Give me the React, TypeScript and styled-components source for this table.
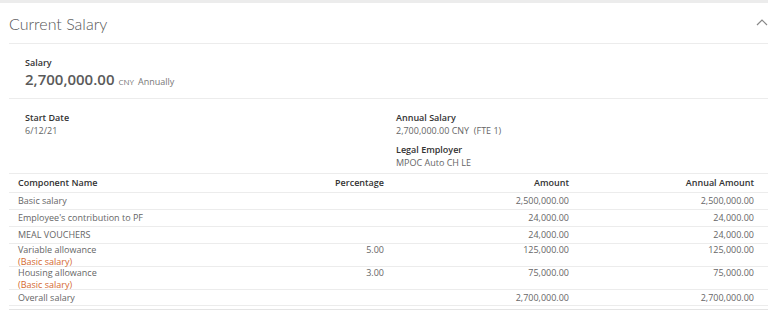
import React from "react";
import styled, { createGlobalStyle } from "styled-components";

const GlobalStyle = createGlobalStyle`
  body {
    margin: 0;
    background: #fff;
    font-family: "Open Sans", "Noto Sans", sans-serif;
    color: #555;
  }
`;

const Page = styled.div`
  width: 768px;
  height: 310px;
  overflow: hidden;
  border-top: 3px solid #ececec;
  box-sizing: border-box;
`;

const Card = styled.section`
  padding-left: 9px;
`;

const Header = styled.div`
  display: flex;
  align-items: center;
  justify-content: space-between;
  height: 40px;
  border-bottom: 1px solid #ececec;
`;

const Title = styled.h2`
  margin: 0;
  font-family: Lato, "Open Sans", sans-serif;
  font-size: 16px;
  font-weight: 300;
  color: #555;
`;

const Chevron = styled.svg`
  width: 12px;
  height: 8px;
  margin-right: 0;
  margin-top: -2px;
`;

const Block = styled.div<{ $tall?: boolean }>`
  padding: ${(p) => (p.$tall ? "12px 16px 4px" : "12px 16px 9px")};
  border-bottom: 1px solid #ececec;
`;

const Grid2 = styled.div`
  display: grid;
  grid-template-columns: 371px 1fr;
`;

const Field = styled.div`
  margin-bottom: 6px;
  &:last-child {
    margin-bottom: 0;
  }
`;

const Label = styled.div`
  font-size: 9px;
  font-weight: 600;
  color: #333;
  line-height: 13px;
`;

const Value = styled.div`
  font-size: 9px;
  color: #666;
  line-height: 13px;
`;

const Big = styled.div`
  display: flex;
  align-items: baseline;
  gap: 4px;
  color: #5a5a5a;
`;

const Amount = styled.span`
  font-size: 15px;
  font-weight: 600;
  line-height: 20px;
`;

const Unit = styled.span<{ $caps?: boolean }>`
  font-size: ${(p) => (p.$caps ? "8px" : "9px")};
  color: #777;
`;

const Row = styled.div<{ $head?: boolean; $tall?: boolean; $short?: boolean }>`
  display: grid;
  grid-template-columns: 200px 184px 185px 190px;
  align-items: ${(p) => (p.$tall ? "start" : "center")};
  height: ${(p) => (p.$head ? "18px" : p.$tall ? "22px" : p.$short ? "15px" : "16px")};
  border-bottom: 1px solid #ececec;
  font-size: 9px;
  line-height: ${(p) => (p.$tall ? "11.5px" : "12px")};
  color: ${(p) => (p.$head ? "#333" : "#666")};
  font-weight: ${(p) => (p.$head ? 600 : 400)};
`;

const Cell = styled.div<{ $right?: boolean; $pad?: number }>`
  padding: 0 ${(p) => p.$pad ?? 9}px 0 9px;
  text-align: ${(p) => (p.$right ? "right" : "left")};
  white-space: nowrap;
`;

const Basis = styled.div`
  color: #d4692f;
`;

const Footer = styled.div`
  height: 3px;
  border-bottom: 1px solid #e4e4e4;
`;

const rows = [
  { name: "Basic salary", pct: "", amount: "2,500,000.00", annual: "2,500,000.00" },
  { name: "Employee's contribution to PF", pct: "", amount: "24,000.00", annual: "24,000.00" },
  { name: "MEAL VOUCHERS", pct: "", amount: "24,000.00", annual: "24,000.00" },
  { name: "Variable allowance", basis: "(Basic salary)", pct: "5.00", amount: "125,000.00", annual: "125,000.00" },
  { name: "Housing allowance", basis: "(Basic salary)", pct: "3.00", amount: "75,000.00", annual: "75,000.00" },
  { name: "Overall salary", pct: "", amount: "2,700,000.00", annual: "2,700,000.00", last: true },
];

const App = () => {
  return (
    <Page>
      <GlobalStyle />
      <Card>
        <Header>
          <Title>Current Salary</Title>
          <Chevron viewBox="0 0 12 8">
            <path d="M1 7 L6 2 L11 7" fill="none" stroke="#888" strokeWidth="1.2" />
          </Chevron>
        </Header>
        <Block>
          <Label>Salary</Label>
          <Big>
            <Amount>2,700,000.00</Amount>
            <Unit $caps>CNY</Unit>
            <Unit>Annually</Unit>
          </Big>
        </Block>
        <Block $tall>
          <Grid2>
            <Field>
              <Label>Start Date</Label>
              <Value>6/12/21</Value>
            </Field>
            <div>
              <Field>
                <Label>Annual Salary</Label>
                <Value>2,700,000.00 CNY&nbsp; (FTE 1)</Value>
              </Field>
              <Field>
                <Label>Legal Employer</Label>
                <Value>MPOC Auto CH LE</Value>
              </Field>
            </div>
          </Grid2>
        </Block>
        <div>
          <Row $head>
            <Cell>Component Name</Cell>
            <Cell $right>Percentage</Cell>
            <Cell $right>Amount</Cell>
            <Cell $right $pad={14}>Annual Amount</Cell>
          </Row>
          {rows.map((r) => (
            <Row key={r.name} $tall={!!r.basis} $short={r.last}>
              <Cell>
                {r.name}
                {r.basis && <Basis>{r.basis}</Basis>}
              </Cell>
              <Cell $right>{r.pct}</Cell>
              <Cell $right>{r.amount}</Cell>
              <Cell $right $pad={14}>{r.annual}</Cell>
            </Row>
          ))}
          <Footer />
        </div>
      </Card>
    </Page>
  );
};

export default App;
